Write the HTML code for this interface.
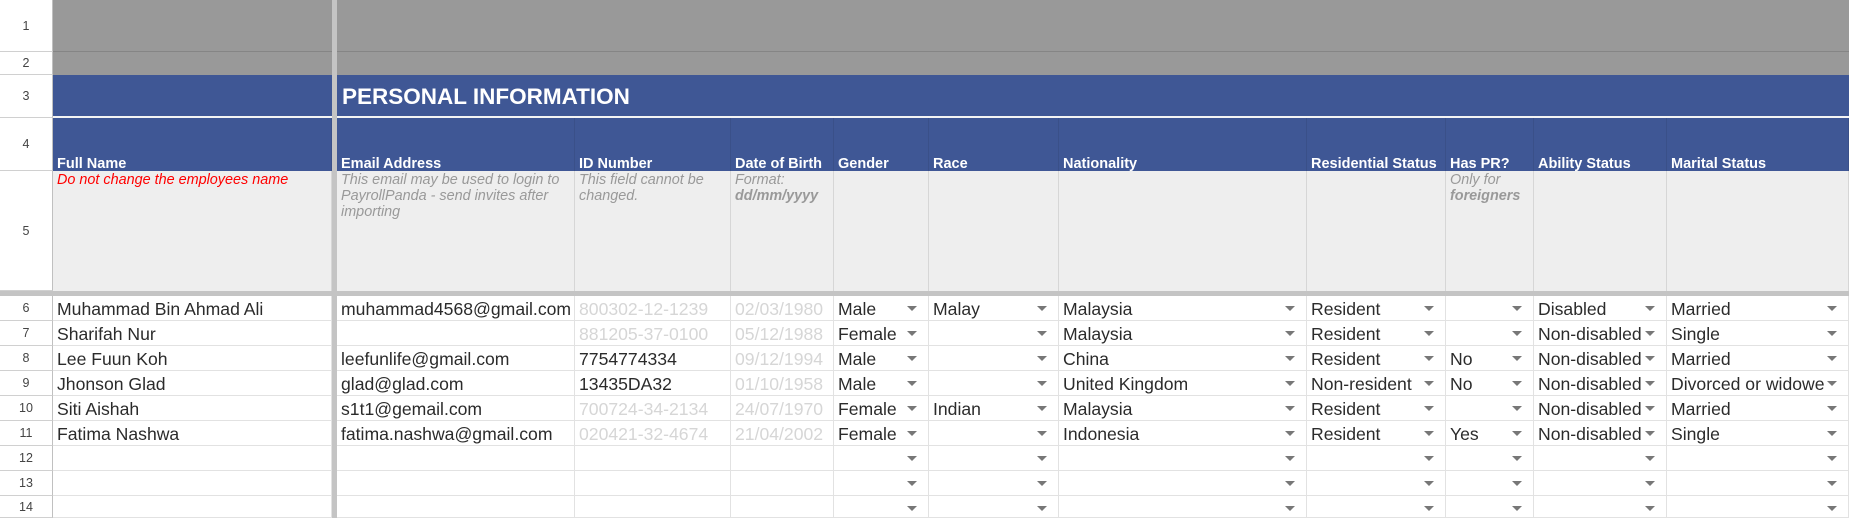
<!DOCTYPE html>
<html><head><meta charset="utf-8"><style>
*{margin:0;padding:0;box-sizing:border-box}
body{width:1849px;height:518px;overflow:hidden;background:#fff;font-family:"Liberation Sans",Arial,sans-serif}
.g{display:grid;grid-template-columns:53px 279px 5px 238px 156px 103px 95px 130px 248px 139px 88px 133px 182px;grid-template-rows:52px 23px 43px 53px 120px 5px 25px 25px 25px 25px 25px 25px 25px 25px 22px;width:1849px;height:518px}
.g>div{position:relative;overflow:hidden;white-space:nowrap}
.h{background:#fff;border-right:1px solid #c0c0c0;border-bottom:1px solid #d0d0d0;color:#444;font-size:12.5px;display:flex;align-items:center;justify-content:center}
.fz{background:#c4c4c4}
.gr{background:#999}
.gr1{border-bottom:1px solid #858585}
.bl{background:#3f5795}
.bl3{border-bottom:2px solid #f4f4f4}
.t{color:#fff;font-weight:bold;font-size:22.5px;padding:9px 0 0 5px}
.l{background:#3f5795;color:#fff;font-weight:bold;font-size:14.5px;line-height:14px;padding:0 0 0 4px;display:flex;align-items:flex-end;border-right:1px solid #3a5089}
.n{background:#eee;border-right:1px solid #d6d6d6;color:#999;font-style:italic;font-size:14.4px;line-height:16px;padding:1px 0 0 4px;white-space:normal!important}
.n b{font-weight:bold}
.d{border-right:1px solid #e2e2e2;border-bottom:1px solid #e2e2e2;font-size:17.6px;color:#2b2b2b;padding:1px 0 0 4px;line-height:24px}
.gy{color:#d6d6d6}
.dd::after{content:"";position:absolute;right:11px;top:10px;border-left:5px solid transparent;border-right:5px solid transparent;border-top:5px solid #777}
</style></head><body><div class="g">
<div class="h">1</div><div class="gr gr1"></div><div class="fz"></div><div class="gr gr1" style="grid-column:span 10"></div>
<div class="h">2</div><div class="gr"></div><div class="fz"></div><div class="gr" style="grid-column:span 10"></div>
<div class="h">3</div><div class="bl bl3"></div><div class="fz"></div><div class="bl bl3 t" style="grid-column:span 10">PERSONAL INFORMATION</div>
<div class="h">4</div><div class="l">Full Name</div><div class="fz"></div><div class="l">Email Address</div><div class="l">ID Number</div><div class="l">Date of Birth</div><div class="l">Gender</div><div class="l">Race</div><div class="l">Nationality</div><div class="l">Residential Status</div><div class="l">Has PR?</div><div class="l">Ability Status</div><div class="l">Marital Status</div>
<div class="h">5</div><div class="n" style="color:#f00">Do not change the employees name</div><div class="fz"></div><div class="n">This email may be used to login to PayrollPanda - send invites after importing</div><div class="n">This field cannot be changed.</div><div class="n">Format: <b>dd/mm/yyyy</b></div><div class="n"></div><div class="n"></div><div class="n"></div><div class="n"></div><div class="n">Only for <b>foreigners</b></div><div class="n"></div><div class="n"></div>
<div class="fz" style="grid-column:span 13"></div>

<div class="h">6</div><div class="d">Muhammad Bin Ahmad Ali</div><div class="fz"></div><div class="d">muhammad4568@gmail.com</div><div class="d gy">800302-12-1239</div><div class="d gy">02/03/1980</div><div class="d dd">Male</div><div class="d dd">Malay</div><div class="d dd">Malaysia</div><div class="d dd">Resident</div><div class="d dd"></div><div class="d dd">Disabled</div><div class="d dd">Married</div>
<div class="h">7</div><div class="d">Sharifah Nur</div><div class="fz"></div><div class="d"></div><div class="d gy">881205-37-0100</div><div class="d gy">05/12/1988</div><div class="d dd">Female</div><div class="d dd"></div><div class="d dd">Malaysia</div><div class="d dd">Resident</div><div class="d dd"></div><div class="d dd">Non-disabled</div><div class="d dd">Single</div>
<div class="h">8</div><div class="d">Lee Fuun Koh</div><div class="fz"></div><div class="d">leefunlife@gmail.com</div><div class="d">7754774334</div><div class="d gy">09/12/1994</div><div class="d dd">Male</div><div class="d dd"></div><div class="d dd">China</div><div class="d dd">Resident</div><div class="d dd">No</div><div class="d dd">Non-disabled</div><div class="d dd">Married</div>
<div class="h">9</div><div class="d">Jhonson Glad</div><div class="fz"></div><div class="d">glad@glad.com</div><div class="d">13435DA32</div><div class="d gy">01/10/1958</div><div class="d dd">Male</div><div class="d dd"></div><div class="d dd">United Kingdom</div><div class="d dd">Non-resident</div><div class="d dd">No</div><div class="d dd">Non-disabled</div><div class="d dd">Divorced or widowe</div>
<div class="h">10</div><div class="d">Siti Aishah</div><div class="fz"></div><div class="d">s1t1@gemail.com</div><div class="d gy">700724-34-2134</div><div class="d gy">24/07/1970</div><div class="d dd">Female</div><div class="d dd">Indian</div><div class="d dd">Malaysia</div><div class="d dd">Resident</div><div class="d dd"></div><div class="d dd">Non-disabled</div><div class="d dd">Married</div>
<div class="h">11</div><div class="d">Fatima Nashwa</div><div class="fz"></div><div class="d">fatima.nashwa@gmail.com</div><div class="d gy">020421-32-4674</div><div class="d gy">21/04/2002</div><div class="d dd">Female</div><div class="d dd"></div><div class="d dd">Indonesia</div><div class="d dd">Resident</div><div class="d dd">Yes</div><div class="d dd">Non-disabled</div><div class="d dd">Single</div>
<div class="h">12</div><div class="d"></div><div class="fz"></div><div class="d"></div><div class="d"></div><div class="d"></div><div class="d dd"></div><div class="d dd"></div><div class="d dd"></div><div class="d dd"></div><div class="d dd"></div><div class="d dd"></div><div class="d dd"></div>
<div class="h">13</div><div class="d"></div><div class="fz"></div><div class="d"></div><div class="d"></div><div class="d"></div><div class="d dd"></div><div class="d dd"></div><div class="d dd"></div><div class="d dd"></div><div class="d dd"></div><div class="d dd"></div><div class="d dd"></div>
<div class="h">14</div><div class="d"></div><div class="fz"></div><div class="d"></div><div class="d"></div><div class="d"></div><div class="d dd"></div><div class="d dd"></div><div class="d dd"></div><div class="d dd"></div><div class="d dd"></div><div class="d dd"></div><div class="d dd"></div>
</div></body></html>
